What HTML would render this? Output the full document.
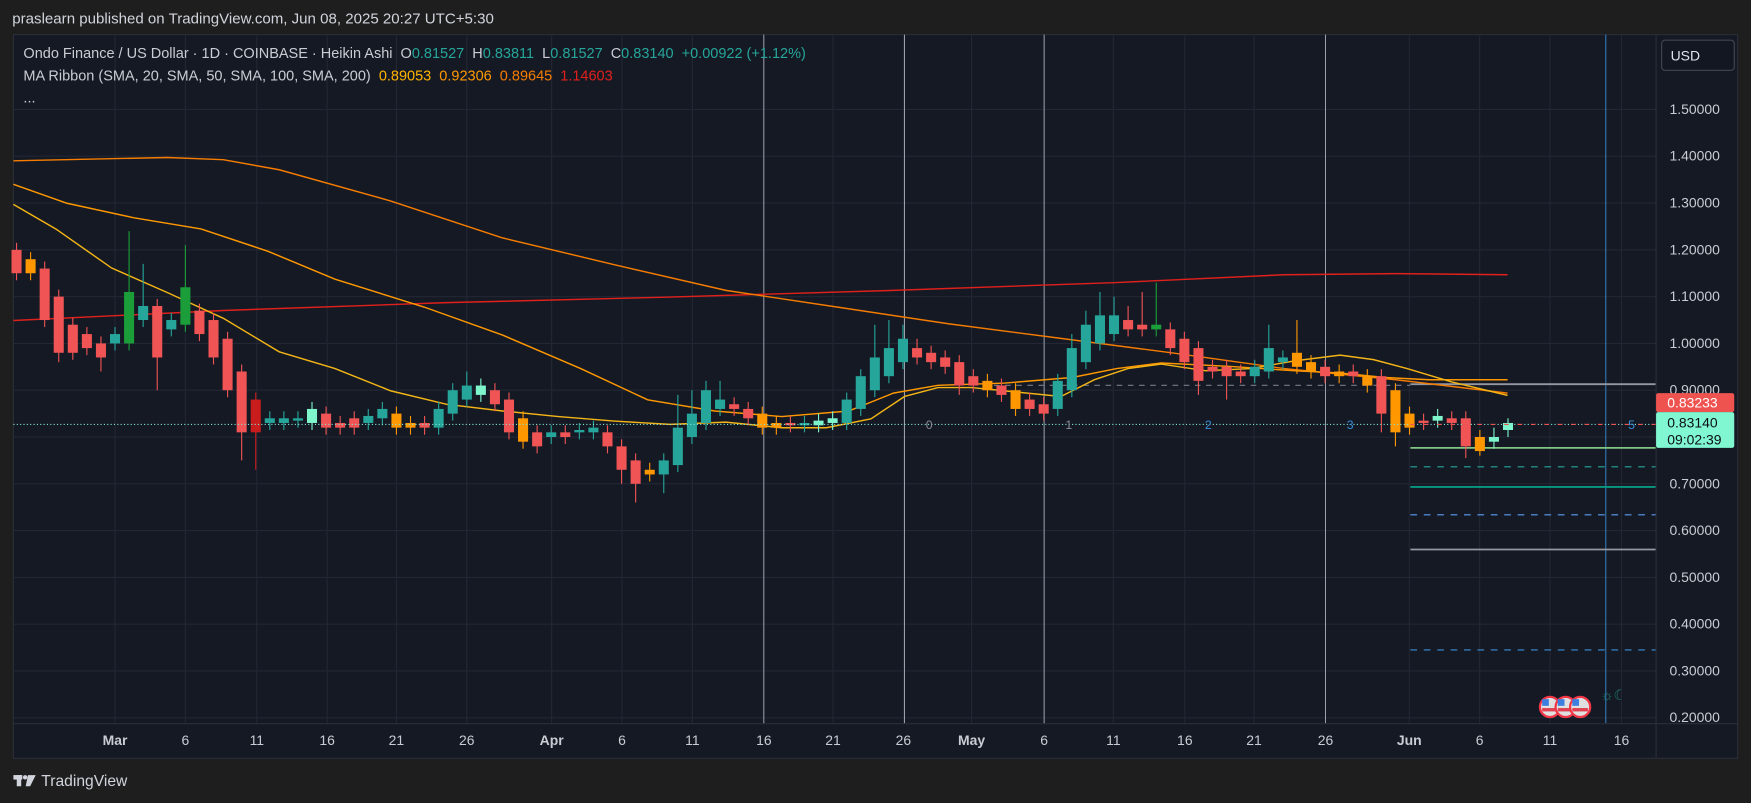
<!DOCTYPE html>
<html><head><meta charset="utf-8"><style>
html,body{margin:0;padding:0;background:#1e1e1e;overflow:hidden}
svg{display:block;font-family:"Liberation Sans",sans-serif}
text{white-space:pre}
</style></head><body>
<svg id="s" width="1751" height="803" viewBox="0 0 1568 719" preserveAspectRatio="none" xmlns="http://www.w3.org/2000/svg" xml:space="preserve">
<rect width="1568" height="719" fill="#1e1e1e"/>
<text x="11" y="21" fill="#d1d4dc" font-size="13.5">praslearn published on TradingView.com, Jun 08, 2025 20:27 UTC+5:30</text>
<rect x="12" y="31" width="1544" height="648" fill="#151924" stroke="#2a2e39"/>
<g id="grid" stroke="#232734" stroke-width="1"></g>
<g id="vl"></g>
<g id="hl"></g>
<g id="ma" fill="none" stroke-width="1.3"></g>
<g id="cd"></g>
<line x1="12" y1="380" x2="1483" y2="380" stroke="#7fe3d2" stroke-dasharray="1 2"/>
<line x1="1263" y1="380" x2="1483" y2="380" stroke="#ef5350" stroke-dasharray="4 8"/>
<g font-size="11" fill="#8a8e99"><text x="829" y="384">0</text><text x="954" y="384">1</text></g>
<g font-size="11" fill="#3a8fd9"><text x="1079" y="384">2</text><text x="1206" y="384">3</text><text x="1458" y="384">5</text></g>
<line x1="1483" y1="31" x2="1483" y2="679" stroke="#2a2e39"/>
<line x1="12" y1="648" x2="1556" y2="648" stroke="#2a2e39"/>
<g id="pl" font-size="12.5" fill="#c9ccd3"></g>
<g id="tl" font-size="12.5" fill="#c9ccd3" text-anchor="middle"></g>
<rect x="1488" y="36" width="65" height="27" rx="3" fill="#131722" stroke="#434651"/>
<text x="1496" y="54" fill="#e0e3eb" font-size="12.5">USD</text>
<rect x="1483" y="352" width="70" height="17" rx="2" fill="#ef5350"/>
<text x="1493" y="365" fill="#fff" font-size="12.5">0.83233</text>
<rect x="1483" y="369" width="70" height="32" rx="2" fill="#80f7d0"/>
<text x="1493" y="383" fill="#0c0e15" font-size="12.5">0.83140</text>
<text x="1493" y="398" fill="#0c0e15" font-size="12.5">09:02:39</text>
<g font-size="13">
<text x="21" y="52" fill="#c9ccd3">Ondo Finance / US Dollar · 1D · COINBASE · Heikin Ashi  O<tspan fill="#26a69a">0.81527</tspan>  H<tspan fill="#26a69a">0.83811</tspan>  L<tspan fill="#26a69a">0.81527</tspan>  C<tspan fill="#26a69a">0.83140  +0.00922 (+1.12%)</tspan></text>
<text x="21" y="72" fill="#c9ccd3">MA Ribbon (SMA, 20, SMA, 50, SMA, 100, SMA, 200)  <tspan fill="#ffb300">0.89053</tspan>  <tspan fill="#ff9800">0.92306</tspan>  <tspan fill="#f57c00">0.89645</tspan>  <tspan fill="#e0201b">1.14603</tspan></text>
<text x="21" y="92" fill="#c9ccd3">...</text>
</g>
<g id="flags"></g>
<text x="1433" y="627" fill="#1f7a6e" font-size="13">☼☾</text>
<g fill="#d1d4dc"><rect x="12" y="694" width="8" height="4"/><rect x="15" y="694" width="4" height="10"/><circle cx="22.5" cy="696" r="2"/><path d="M25 694h7l-5 10h-4z"/></g>
<text x="37" y="704" fill="#d1d4dc" font-size="14">TradingView</text>
</svg>
<script>
var NS="http://www.w3.org/2000/svg";
function Y(p){return 98+(1.5-p)*419}
function X(d){return 103+d*12.6}
function el(g,t,a){var e=document.createElementNS(NS,t);for(var k in a)e.setAttribute(k,a[k]);document.getElementById(g).appendChild(e);return e}
for(var p=0.2;p<1.55;p+=0.1){el("grid","line",{x1:12,x2:1483,y1:Y(p),y2:Y(p)});var t=el("pl","text",{x:1495,y:Y(p)+4});t.textContent=p.toFixed(5);}
var tl=[["Mar",103],["6",166],["11",230],["16",293],["21",355],["26",418],["Apr",494],["6",557],["11",620],["16",684],["21",746],["26",809],["May",870],["6",935],["11",997],["16",1061],["21",1123],["26",1187],["Jun",1262],["6",1325],["11",1388],["16",1452]];
tl.forEach(function(a){el("grid","line",{x1:a[1],x2:a[1],y1:31,y2:648});var t=el("tl","text",{x:a[1],y:667});t.textContent=a[0];if(isNaN(+a[0]))t.setAttribute("font-weight","bold");});
[684,810,935,1187].forEach(function(x){el("vl","line",{x1:x,x2:x,y1:31,y2:648,stroke:"#aab0bd","stroke-width":0.8})});
el("vl","line",{x1:1438,x2:1438,y1:31,y2:648,stroke:"#3a8fd9","stroke-width":0.8});
el("hl","line",{x1:880,x2:1263,y1:345,y2:345,stroke:"#787b86","stroke-dasharray":"5 5"});
[[344,"#9598a1",0],[401,"#81c784",0],[418,"#26a69a",1],[436,"#089981",0],[461,"#5b9cf6",1],[492,"#9598a1",0],[582,"#3a8fd9",1]].forEach(function(h){var a={x1:1263,x2:1483,y1:h[0],y2:h[0],stroke:h[1],"stroke-width":h[2]?1:1.6};if(h[2])a["stroke-dasharray"]="6 6";el("hl","line",a)});
function path(pts,c){el("ma","path",{d:"M"+pts.map(function(p){return p.join(",")}).join("L"),stroke:c})}
path([[12,287],[200,278],[400,271],[600,266],[800,260],[1000,253],[1150,246],[1250,245],[1350,246]],"#e0201b");
path([[12,144],[150,141],[200,143],[250,152],[350,180],[450,213],[550,237],[650,260],[750,275],[850,290],[950,303],[1050,316],[1150,330],[1250,340],[1350,352]],"#f57c00");
path([[12,165],[60,182],[120,195],[180,205],[240,225],[300,250],[380,275],[450,300],[520,330],[580,358],[640,368],[700,373],[760,368],[800,352],[840,345],[900,343],[960,338],[1000,330],[1040,325],[1100,328],[1160,332],[1200,334],[1240,338],[1280,340],[1350,340]],"#ff9800");
path([[12,183],[50,205],[100,240],[150,262],[200,285],[250,315],[300,330],[350,350],[400,362],[450,368],[500,373],[550,377],[600,380],[650,378],[700,383],[740,383],[780,375],[810,355],[840,347],[870,347],[900,350],[950,355],[980,340],[1010,330],[1040,326],[1080,332],[1120,330],[1160,323],[1200,318],[1230,322],[1260,330],[1300,342],[1350,354]],"#f2b416");
var C={r:"#f05454",t:"#26a69a",m:"#7ff5cc",o:"#ff9800",g:"#1b9e3a",d:"#c91c1c"};
var D=[["r",1.20,1.15],["o",1.18,1.15],["r",1.16,1.05],["r",1.10,0.98,0,0.96],["r",1.04,0.98],["r",1.02,0.99],["r",1.00,0.97,0,0.94],
["t",1.00,1.02],["g",1.00,1.11,1.24],["t",1.05,1.08,1.17],["r",1.08,0.97,0,0.90],["t",1.03,1.05],["g",1.04,1.12,1.21],["r",1.07,1.02],["r",1.05,0.97],["r",1.01,0.90],["r",0.94,0.81,0,0.75],["d",0.88,0.81,0,0.73],
["t",0.83,0.84],["t",0.83,0.84],["t",0.835,0.84],["m",0.83,0.86],["r",0.85,0.82],["r",0.83,0.82],["r",0.84,0.82],["t",0.83,0.845],["t",0.84,0.86],["o",0.85,0.82],["o",0.83,0.82],["r",0.83,0.82],["t",0.82,0.86],["t",0.85,0.90],["t",0.88,0.91,0.94],["m",0.89,0.91],["r",0.90,0.87],["r",0.88,0.81],["o",0.84,0.79],["r",0.81,0.78],
["t",0.80,0.81],["r",0.81,0.80],["t",0.81,0.815],["t",0.81,0.82],["r",0.81,0.78],["r",0.78,0.73,0,0.70],["r",0.75,0.70,0,0.66],["o",0.73,0.72],["t",0.72,0.75,0,0.68],["t",0.74,0.82,0.89],["t",0.80,0.85,0.90],["t",0.83,0.90,0.92],["t",0.86,0.88,0.92],["r",0.87,0.86],["r",0.86,0.84],["o",0.85,0.82],["o",0.83,0.82],["r",0.83,0.825],["t",0.825,0.83],["m",0.825,0.835],["m",0.83,0.84],["t",0.83,0.88],["t",0.86,0.93],["t",0.90,0.97,1.04],["t",0.93,0.99,1.05],["t",0.96,1.01,1.04],["r",0.99,0.97,1.01],["r",0.98,0.96],["r",0.97,0.95],["r",0.96,0.91,0,0.89],
["r",0.93,0.91],["o",0.92,0.90],["r",0.91,0.89],["o",0.90,0.86],["r",0.88,0.86],["r",0.87,0.85],["t",0.86,0.92],["t",0.90,0.99,1.02],["t",0.96,1.04,1.07],["t",1.00,1.06,1.11],["t",1.02,1.06,1.10],["r",1.05,1.03,1.08],["r",1.04,1.03,1.11],["g",1.03,1.04,1.13],["r",1.03,0.99],["r",1.01,0.96],["r",0.99,0.92,0,0.89],["r",0.95,0.94],["r",0.95,0.93,0,0.88],["r",0.94,0.93],["t",0.93,0.95],["t",0.94,0.99,1.04],["t",0.96,0.97],["o",0.98,0.95,1.05],["o",0.96,0.94],["r",0.95,0.93],["o",0.94,0.93],["r",0.94,0.93],["o",0.93,0.91],["r",0.93,0.85,0,0.81],["o",0.90,0.81,0,0.78],
["o",0.85,0.82],["r",0.835,0.83],["m",0.835,0.845,0.86],["r",0.84,0.83,0.855],["r",0.84,0.78,0,0.755],["o",0.80,0.77,0,0.76],["m",0.79,0.80,0.82],["m",0.815,0.83,0.84]];
D.forEach(function(c,i){var x=X(i-7),col=C[c[0]],hi=Math.max(c[1],c[2]),lo=Math.min(c[1],c[2]);var h=c[3]||hi+0.015,l=c[4]||lo-0.015;
el("cd","line",{x1:x,x2:x,y1:Y(h),y2:Y(l),stroke:col,"stroke-width":1});
var bh=Math.max(1.5,Y(lo)-Y(hi));el("cd","rect",{x:x-4.5,y:Y(hi),width:9,height:bh,fill:col});});
[1388,1402,1415].forEach(function(x){el("flags","circle",{cx:x,cy:633,r:9,fill:"#e0e0e0",stroke:"#f23645","stroke-width":2});el("flags","rect",{x:x-7,y:634,width:14,height:3,fill:"#e04050"});el("flags","rect",{x:x-7,y:626,width:6,height:6,fill:"#3d7fe0"});});
</script>
</body></html>
